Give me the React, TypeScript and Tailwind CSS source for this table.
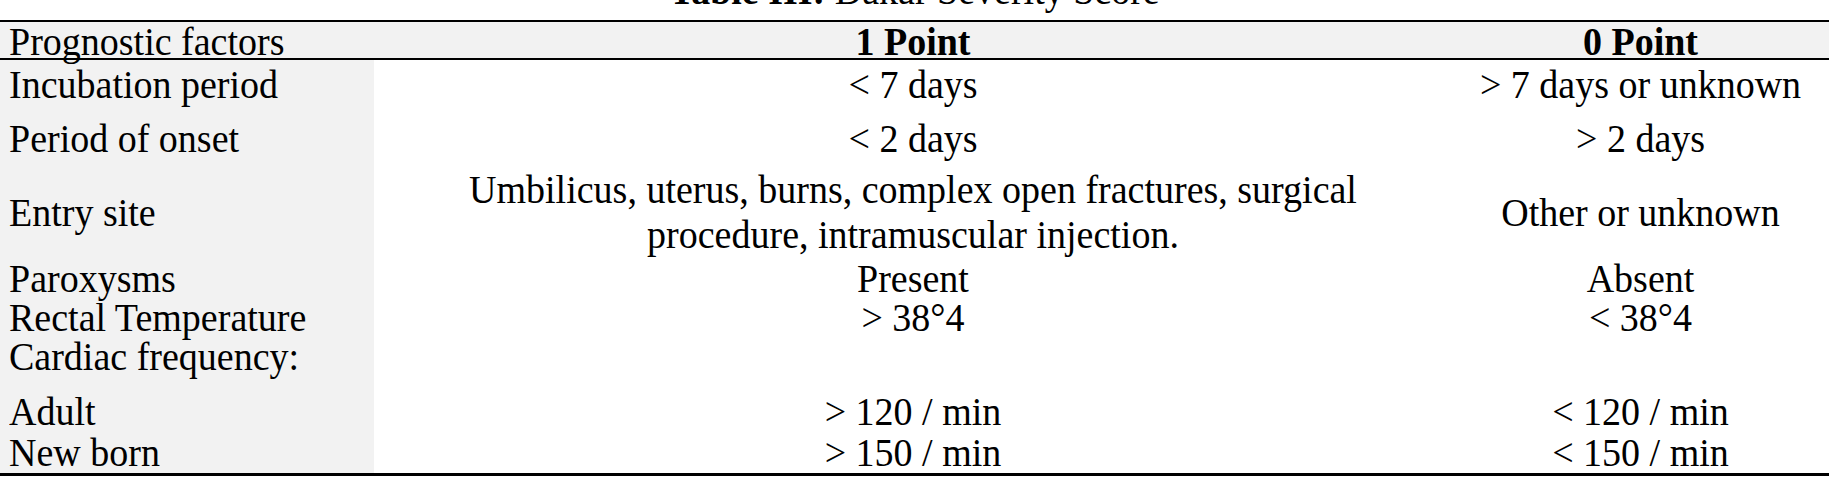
import React from "react";

type RowProps = {
  label: string;
  one?: React.ReactNode;
  zero?: React.ReactNode;
  pad: string;
};

// the scanned table's glyphs are a bit taller than plain Times, so stretch them slightly
function T({ children, className = "" }: { children?: React.ReactNode; className?: string }) {
  return <span className={`inline-block scale-y-[1.07] ${className}`}>{children}</span>;
}

// one body row; pad is a full padding class so the grey column stays continuous
function Row({ label, one, zero, pad }: RowProps) {
  return (
    <div className="grid grid-cols-[374px_1078px_377px]">
      <div className={`bg-[#f2f2f2] pl-[9px] flex items-center ${pad}`}>
        <T>{label}</T>
      </div>
      <div className={`text-center flex items-center justify-center ${pad}`}>{one && <T>{one}</T>}</div>
      <div className={`text-center flex items-center justify-center ${pad}`}>{zero && <T>{zero}</T>}</div>
    </div>
  );
}

export default function App() {
  return (
    <div className="w-[1847px] h-[484px] overflow-hidden bg-white text-black font-['Liberation_Serif','Times_New_Roman',serif] text-[38px] leading-[38px]">
      {/* caption, cut off by the top of the page */}
      <div className="w-[1829px] h-[20px] flex items-end justify-center pb-[11px]">
        <T className="whitespace-nowrap">
          <span className="font-bold">Table III:</span> Dakar Severity Score
        </T>
      </div>

      <div className="w-[1829px] border-t-2 border-b-[3px] border-black">
        {/* header */}
        <div className="grid grid-cols-[374px_1078px_377px] h-[38px] bg-[#f2f2f2] border-b-2 border-black items-center">
          <div className="pl-[9px]">
            <T>Prognostic factors</T>
          </div>
          <div className="text-center font-bold">
            <T>1 Point</T>
          </div>
          <div className="text-center font-bold">
            <T>0 Point</T>
          </div>
        </div>

        <Row pad="pt-[5px]" label="Incubation period" one="< 7 days" zero="> 7 days or unknown" />
        <Row pad="pt-[16px]" label="Period of onset" one="< 2 days" zero="> 2 days" />
        <Row
          pad="pt-[13px]"
          label="Entry site"
          one={
            <span className="block leading-[42px]">
              Umbilicus, uterus, burns, complex open fractures, surgical
              <br />
              procedure, intramuscular injection.
            </span>
          }
          zero="Other or unknown"
        />
        <Row pad="pt-[5px]" label="Paroxysms" one="Present" zero="Absent" />
        <Row pad="pt-[1px]" label="Rectal Temperature" one="> 38°4" zero="< 38°4" />
        <Row pad="pt-[1px]" label="Cardiac frequency:" />
        <Row pad="pt-[17px]" label="Adult" one="> 120 / min" zero="< 120 / min" />
        <Row pad="pt-[3px] pb-[2px]" label="New born" one="> 150 / min" zero="< 150 / min" />
      </div>
    </div>
  );
}
